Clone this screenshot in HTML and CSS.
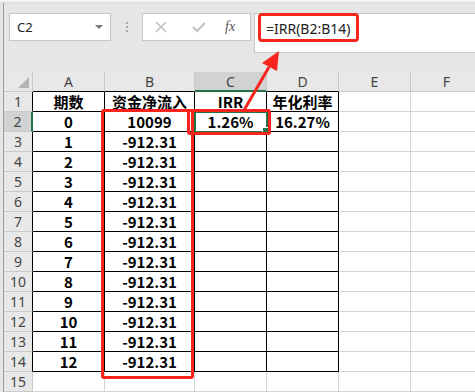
FILE: index.html
```html
<!DOCTYPE html>
<html lang="zh-CN">
  <head>
    <meta charset="UTF-8" />
    <meta name="viewport" content="width=device-width, initial-scale=1.0" />
    <title>IRR</title>
    <link rel="stylesheet" href="styles.css">
  </head>
  <body>
    <div class="top-strip"></div>
    <div class="app">
      <!-- toolbar: name box + formula bar -->
      <div class="toolbar">
        <div class="name-box"><span>C2</span><i class="caret"></i></div>
        <div class="grip"><b></b><b></b><b></b></div>
        <div class="fx-box">
          <svg class="fx-cancel" width="12" height="12" viewBox="0 0 12 12">
            <path d="M1 1 L11 11 M11 1 L1 11" stroke="#c2c2c2" stroke-width="1.6" fill="none" />
          </svg>
          <svg class="fx-ok" width="14" height="12" viewBox="0 0 14 12">
            <path d="M1 6 L5 10 L13 2" stroke="#c2c2c2" stroke-width="2" fill="none" />
          </svg>
          <span class="fx-label">fx</span>
        </div>
        <div class="formula">=IRR(B2:B14)</div>
      </div>

      <!-- sheet -->
      <div class="sheet">
        <div class="cell hd corner"></div>
        <div class="cell hd edge-b">A</div>
        <div class="cell hd edge-b">B</div>
        <div class="cell hd sel-col">C</div>
        <div class="cell hd edge-b">D</div>
        <div class="cell hd">E</div>
        <div class="cell hd">F</div>

        <div class="cell hd edge-r">1</div>
        <div class="cell tb">期数</div><div class="cell tb">资金净流入</div><div class="cell tb">IRR</div><div class="cell tb">年化利率</div><div class="cell"></div><div class="cell"></div>

        <div class="cell hd sel-row">2</div>
        <div class="cell tb">0</div><div class="cell tb">10099</div><div class="cell tb active">1.26%</div><div class="cell tb">16.27%</div><div class="cell"></div><div class="cell"></div>

        <div class="cell hd edge-r">3</div>
        <div class="cell tb">1</div><div class="cell tb">-912.31</div><div class="cell tb"></div><div class="cell tb"></div><div class="cell"></div><div class="cell"></div>

        <div class="cell hd edge-r">4</div>
        <div class="cell tb">2</div><div class="cell tb">-912.31</div><div class="cell tb"></div><div class="cell tb"></div><div class="cell"></div><div class="cell"></div>

        <div class="cell hd edge-r">5</div>
        <div class="cell tb">3</div><div class="cell tb">-912.31</div><div class="cell tb"></div><div class="cell tb"></div><div class="cell"></div><div class="cell"></div>

        <div class="cell hd edge-r">6</div>
        <div class="cell tb">4</div><div class="cell tb">-912.31</div><div class="cell tb"></div><div class="cell tb"></div><div class="cell"></div><div class="cell"></div>

        <div class="cell hd edge-r">7</div>
        <div class="cell tb">5</div><div class="cell tb">-912.31</div><div class="cell tb"></div><div class="cell tb"></div><div class="cell"></div><div class="cell"></div>

        <div class="cell hd edge-r">8</div>
        <div class="cell tb">6</div><div class="cell tb">-912.31</div><div class="cell tb"></div><div class="cell tb"></div><div class="cell"></div><div class="cell"></div>

        <div class="cell hd edge-r">9</div>
        <div class="cell tb">7</div><div class="cell tb">-912.31</div><div class="cell tb"></div><div class="cell tb"></div><div class="cell"></div><div class="cell"></div>

        <div class="cell hd edge-r">10</div>
        <div class="cell tb">8</div><div class="cell tb">-912.31</div><div class="cell tb"></div><div class="cell tb"></div><div class="cell"></div><div class="cell"></div>

        <div class="cell hd edge-r">11</div>
        <div class="cell tb">9</div><div class="cell tb">-912.31</div><div class="cell tb"></div><div class="cell tb"></div><div class="cell"></div><div class="cell"></div>

        <div class="cell hd edge-r">12</div>
        <div class="cell tb">10</div><div class="cell tb">-912.31</div><div class="cell tb"></div><div class="cell tb"></div><div class="cell"></div><div class="cell"></div>

        <div class="cell hd edge-r">13</div>
        <div class="cell tb">11</div><div class="cell tb">-912.31</div><div class="cell tb"></div><div class="cell tb"></div><div class="cell"></div><div class="cell"></div>

        <div class="cell hd edge-r">14</div>
        <div class="cell tb">12</div><div class="cell tb">-912.31</div><div class="cell tb"></div><div class="cell tb"></div><div class="cell"></div><div class="cell"></div>

        <div class="cell hd">15</div>
        <div class="cell"></div><div class="cell"></div><div class="cell"></div><div class="cell"></div><div class="cell"></div><div class="cell"></div>
      </div>
    </div>

    <!-- red annotations -->
    <div class="mark mark-formula"></div>
    <div class="mark mark-range"></div>
    <div class="mark mark-cell"></div>
    <svg class="arrow" width="475" height="392" viewBox="0 0 475 392">
      <line x1="243" y1="112" x2="269" y2="67" stroke="#f5251d" stroke-width="3" />
      <polygon points="279,51 277,71 262,63" fill="#f5251d" />
    </svg>
  </body>
</html>
```

FILE: styles.css
```css
* {
  box-sizing: border-box;
}
body {
  margin: 0;
  width: 475px;
  height: 392px;
  overflow: hidden;
  background: #e6e6e6;
  font-family: "Noto Sans", sans-serif;
  position: relative;
}
.top-strip {
  height: 3px;
  background: #f4f4f4;
  border-bottom: 1px solid #dcdcdc;
}
.app {
  margin-left: 3px;
  border-left: 1px solid #9a9a9a;
  height: 389px;
}

/* Toolbar */
.toolbar {
  display: flex;
  align-items: flex-start;
  height: 69px;
  padding: 10px 0 0 5px;
}
.name-box {
  display: flex;
  align-items: center;
  justify-content: space-between;
  width: 102px;
  height: 28px;
  padding: 0 7px 0 7px;
  background: #fff;
  border: 1px solid #c6c6c6;
  font-size: 13px;
  color: #222;
}
.caret {
  width: 0;
  height: 0;
  border-left: 4px solid transparent;
  border-right: 4px solid transparent;
  border-top: 4px solid #777;
}
.grip {
  display: flex;
  flex-direction: column;
  gap: 2px;
  margin: 9px 14px 0 15px;
}
.grip b {
  width: 2px;
  height: 2px;
  background: #a8a8a8;
}
.fx-box {
  display: flex;
  align-items: center;
  width: 109px;
  height: 28px;
  background: #fff;
  border: 1px solid #c6c6c6;
}
.fx-cancel {
  margin-left: 12px;
}
.fx-ok {
  margin-left: 25px;
}
.fx-label {
  margin-left: 19px;
  color: #555;
  font-family: "Liberation Serif", serif;
  font-style: italic;
  font-size: 14px;
}
.formula {
  flex: 1;
  height: 40px;
  margin-left: 3px;
  padding: 5px 0 0 11px;
  background: #fff;
  border: 1px solid #c6c6c6;
  border-right: 0;
  font-size: 14px;
  color: #222;
}

/* Sheet */
.sheet {
  display: grid;
  grid-template-columns: 29px 72px 90px 72px 72px 72px 72px;
  grid-auto-rows: 20px;
  background: #fff;
}
.cell {
  border-right: 1px solid #d4d4d4;
  border-bottom: 1px solid #d4d4d4;
  text-align: center;
  line-height: 19px;
  font-family: "Noto Sans CJK SC", sans-serif;
  font-weight: 700;
  font-size: 15px;
  color: #000;
  white-space: nowrap;
}
.hd {
  background: #e8e8e8;
  border-color: #c8c8c8;
  font-family: "Noto Sans", sans-serif;
  font-weight: 400;
  font-size: 14px;
  color: #444;
}
.corner {
  position: relative;
}
.corner::after {
  content: "";
  position: absolute;
  right: 3px;
  bottom: 3px;
  border-left: 11px solid transparent;
  border-bottom: 11px solid #b4b4b4;
}
.sel-col {
  background: #d2d2d2;
  border-bottom: 2px solid #217346;
}
.sel-row {
  background: #d2d2d2;
  border-right: 2px solid #217346;
}
.edge-r {
  border-right-color: #000;
}
.edge-b {
  border-bottom-color: #000;
}
.tb {
  border-right-color: #000;
  border-bottom-color: #000;
}
.active {
  position: relative;
  outline: 2px solid #217346;
  outline-offset: -1px;
}
.active::after {
  content: "";
  position: absolute;
  right: -3px;
  bottom: -3px;
  width: 5px;
  height: 5px;
  background: #217346;
  border: 1px solid #fff;
}

/* Annotations */
.mark {
  position: absolute;
  border: 3px solid #f5251d;
  border-radius: 3px;
}
.mark-formula {
  left: 258px;
  top: 13px;
  width: 101px;
  height: 29px;
  border-radius: 4px;
}
.mark-range {
  left: 101px;
  top: 109px;
  width: 93px;
  height: 270px;
}
.mark-cell {
  left: 187px;
  top: 109px;
  width: 84px;
  height: 26px;
}
.arrow {
  position: absolute;
  left: 0;
  top: 0;
  pointer-events: none;
}
```
